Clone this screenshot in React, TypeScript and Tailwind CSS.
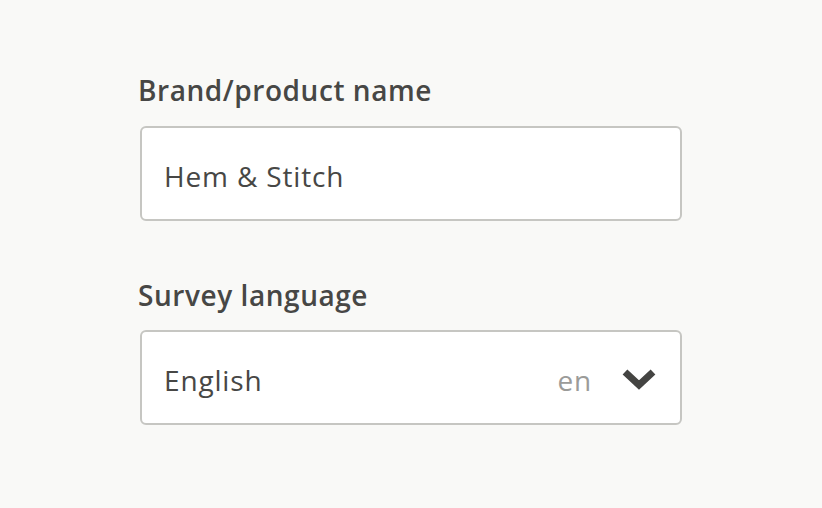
export default function App() {
  return (
    <div className="min-h-screen w-full bg-[#f9f9f7] font-['Open_Sans',sans-serif] text-[#474745]">
      <div className="ml-[140px] w-[542px] pt-[70px]">
        <label className="block text-[28px] font-semibold leading-[40px] tracking-[0.02em] ml-[-2px]">Brand/product name</label>
        <div className="mt-[16px] flex h-[95px] items-center rounded-[6px] border-2 border-[#c6c6c2] bg-white px-[22px]">
          <span className="pt-[4px] text-[28px] tracking-[0.03em]">Hem &amp; Stitch</span>
        </div>
        <label className="mt-[54px] block text-[28px] font-semibold leading-[40px] tracking-[0.02em] ml-[-2px]">Survey language</label>
        <div className="mt-[15px] flex h-[95px] items-center rounded-[6px] border-2 border-[#c6c6c2] bg-white pl-[22px] pr-[24px]">
          <span className="flex-1 pt-[4px] text-[28px] tracking-[0.03em]">English</span>
          <span className="pt-[4px] text-[28px] tracking-[0.03em] text-[#9b9b99]">en</span>
          <svg className="ml-[30px]" width="34" height="24" viewBox="0 0 34 24">
            <path d="M3 6 L17 19 L31 6" fill="none" stroke="#444442" strokeWidth="7" strokeLinejoin="miter" />
          </svg>
        </div>
      </div>
    </div>
  );
}
